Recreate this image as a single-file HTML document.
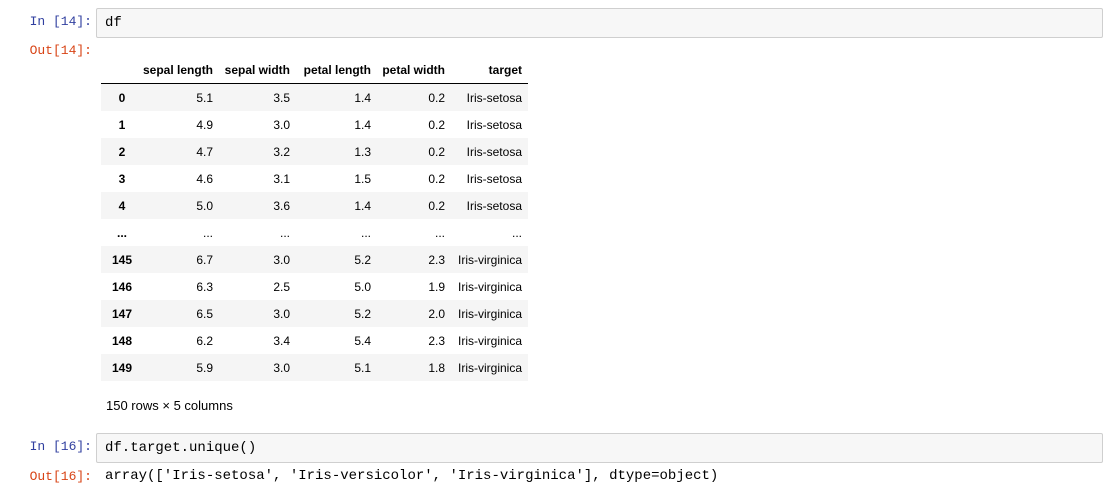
<!DOCTYPE html>
<html><head><style>
body{margin:0;background:#fff;width:1109px;height:501px;overflow:hidden;position:relative;font-family:"Liberation Sans",Arial,sans-serif}
.p{position:absolute;font-family:"Liberation Mono",monospace;font-size:13px;text-align:right;width:92px;left:0}
.in{color:#303F9F}.out{color:#D84315}
.box{position:absolute;left:96px;width:1007px;height:30px;background:#f7f7f7;border:1px solid #cfcfcf;border-radius:2px;font-family:"Liberation Mono",monospace;font-size:14px;line-height:29px;padding-left:8px;box-sizing:border-box}
table{position:absolute;left:101px;top:57px;border-collapse:collapse;font-size:12px;color:#000;table-layout:fixed;width:427px}
th,td{height:27px;padding:0 6px 0 0;text-align:right;white-space:nowrap;overflow:visible}
thead th{height:26px;border-bottom:1px solid #000}
tbody th{text-align:center;padding:0}
tbody tr:nth-child(odd){background:#f5f5f5}
</style></head><body>
<div class="p in" style="top:14px">In&nbsp;[14]:</div>
<div class="box" style="top:8px">df</div>
<div class="p out" style="top:43px">Out[14]:</div>
<table>
<colgroup><col style="width:42px"><col style="width:76px"><col style="width:77px"><col style="width:81px"><col style="width:74px"><col style="width:77px"></colgroup>
<thead><tr><th></th><th>sepal length</th><th>sepal width</th><th>petal length</th><th>petal width</th><th>target</th></tr></thead>
<tbody>
<tr><th>0</th><td>5.1</td><td>3.5</td><td>1.4</td><td>0.2</td><td>Iris-setosa</td></tr>
<tr><th>1</th><td>4.9</td><td>3.0</td><td>1.4</td><td>0.2</td><td>Iris-setosa</td></tr>
<tr><th>2</th><td>4.7</td><td>3.2</td><td>1.3</td><td>0.2</td><td>Iris-setosa</td></tr>
<tr><th>3</th><td>4.6</td><td>3.1</td><td>1.5</td><td>0.2</td><td>Iris-setosa</td></tr>
<tr><th>4</th><td>5.0</td><td>3.6</td><td>1.4</td><td>0.2</td><td>Iris-setosa</td></tr>
<tr><th>...</th><td>...</td><td>...</td><td>...</td><td>...</td><td>...</td></tr>
<tr><th>145</th><td>6.7</td><td>3.0</td><td>5.2</td><td>2.3</td><td>Iris-virginica</td></tr>
<tr><th>146</th><td>6.3</td><td>2.5</td><td>5.0</td><td>1.9</td><td>Iris-virginica</td></tr>
<tr><th>147</th><td>6.5</td><td>3.0</td><td>5.2</td><td>2.0</td><td>Iris-virginica</td></tr>
<tr><th>148</th><td>6.2</td><td>3.4</td><td>5.4</td><td>2.3</td><td>Iris-virginica</td></tr>
<tr><th>149</th><td>5.9</td><td>3.0</td><td>5.1</td><td>1.8</td><td>Iris-virginica</td></tr>
</tbody></table>
<div style="position:absolute;left:106px;top:398px;font-size:13px">150 rows × 5 columns</div>
<div class="p in" style="top:439px">In&nbsp;[16]:</div>
<div class="box" style="top:433px">df.target.unique()</div>
<div class="p out" style="top:469px">Out[16]:</div>
<div style="position:absolute;left:105px;top:468px;font-family:'Liberation Mono',monospace;font-size:14px">array(['Iris-setosa', 'Iris-versicolor', 'Iris-virginica'], dtype=object)</div>
</body></html>
